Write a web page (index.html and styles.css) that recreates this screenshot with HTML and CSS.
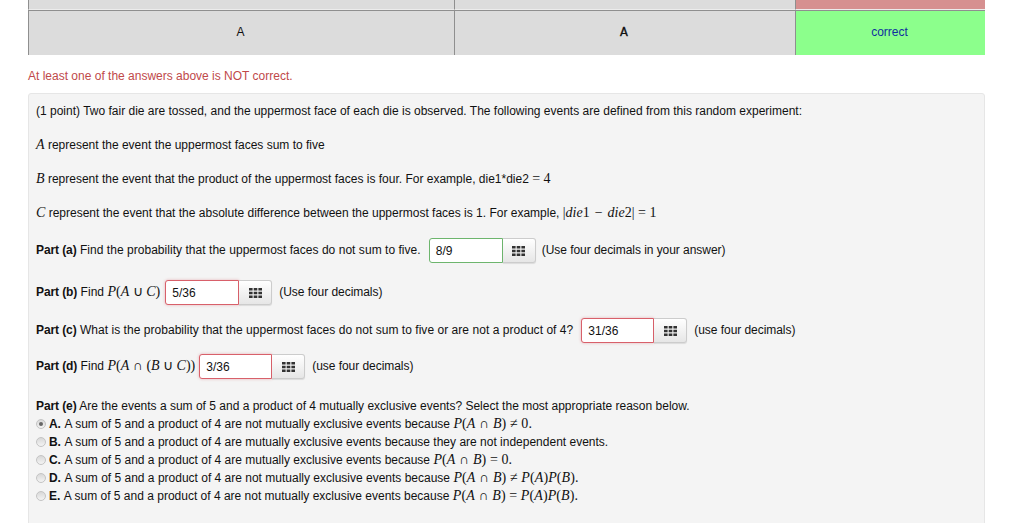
FILE: index.html
```html
<!DOCTYPE html>
<html lang="en">
<head>
<meta charset="utf-8">
<title>Problem</title>
<link rel="stylesheet" href="styles.css">
</head>
<body>
<div class="results">
  <div class="cell top"></div><div class="cell top"></div><div class="cell top bad"></div>
  <div class="cell main">A</div><div class="cell main mono">A</div><div class="cell main good">correct</div>
</div>
<p class="warn">At least one of the answers above is NOT correct.</p>
<div class="panel">
  <p class="line intro">(1 point) Two fair die are tossed, and the uppermost face of each die is observed. The following events are defined from this random experiment:</p>
  <p class="line def"><i class="m">A</i> represent the event the uppermost faces sum to five</p>
  <p class="line def"><i class="m">B</i> represent the event that the product of the uppermost faces is four. For example, die1*die2 <span class="m">= 4</span></p>
  <p class="line def"><i class="m">C</i> represent the event that the absolute difference between the uppermost faces is 1. For example, <span class="m">|<i>die</i>1 <span class="op">−</span> <i>die</i>2| = 1</span></p>
  <div class="part pa"><span class="q"><b>Part (a)</b> Find the probability that the uppermost faces do not sum to five.</span>
    <span class="answer"><span class="field ok">8/9</span><span class="grid-btn"><svg width="13" height="10" viewBox="0 0 13 10"><path d="M0 0h3.6v2.6H0zM4.7 0h3.6v2.6H4.7zM9.4 0H13v2.6H9.4zM0 3.7h3.6v2.6H0zM4.7 3.7h3.6v2.6H4.7zM9.4 3.7H13v2.6H9.4zM0 7.4h3.6V10H0zM4.7 7.4h3.6V10H4.7zM9.4 7.4H13V10H9.4z"/></svg></span></span>
    <span class="hint">(Use four decimals in your answer)</span></div>
  <div class="part pb"><span class="q"><b>Part (b)</b> Find <span class="m"><i>P</i>(<i>A</i> ∪ <i>C</i>)</span></span>
    <span class="answer"><span class="field no">5/36</span><span class="grid-btn"><svg width="13" height="10" viewBox="0 0 13 10"><path d="M0 0h3.6v2.6H0zM4.7 0h3.6v2.6H4.7zM9.4 0H13v2.6H9.4zM0 3.7h3.6v2.6H0zM4.7 3.7h3.6v2.6H4.7zM9.4 3.7H13v2.6H9.4zM0 7.4h3.6V10H0zM4.7 7.4h3.6V10H4.7zM9.4 7.4H13V10H9.4z"/></svg></span></span>
    <span class="hint">(Use four decimals)</span></div>
  <div class="part pc"><span class="q"><b>Part (c)</b> What is the probability that the uppermost faces do not sum to five or are not a product of 4?</span>
    <span class="answer"><span class="field no">31/36</span><span class="grid-btn"><svg width="13" height="10" viewBox="0 0 13 10"><path d="M0 0h3.6v2.6H0zM4.7 0h3.6v2.6H4.7zM9.4 0H13v2.6H9.4zM0 3.7h3.6v2.6H0zM4.7 3.7h3.6v2.6H4.7zM9.4 3.7H13v2.6H9.4zM0 7.4h3.6V10H0zM4.7 7.4h3.6V10H4.7zM9.4 7.4H13V10H9.4z"/></svg></span></span>
    <span class="hint">(use four decimals)</span></div>
  <div class="part pd"><span class="q"><b>Part (d)</b> Find <span class="m"><i>P</i>(<i>A</i> ∩ (<i>B</i> ∪ <i>C</i>))</span></span>
    <span class="answer"><span class="field no">3/36</span><span class="grid-btn"><svg width="13" height="10" viewBox="0 0 13 10"><path d="M0 0h3.6v2.6H0zM4.7 0h3.6v2.6H4.7zM9.4 0H13v2.6H9.4zM0 3.7h3.6v2.6H0zM4.7 3.7h3.6v2.6H4.7zM9.4 3.7H13v2.6H9.4zM0 7.4h3.6V10H0zM4.7 7.4h3.6V10H4.7zM9.4 7.4H13V10H9.4z"/></svg></span></span>
    <span class="hint">(use four decimals)</span></div>
  <p class="line pe"><b>Part (e)</b> Are the events a sum of 5 and a product of 4 mutually exclusive events? Select the most appropriate reason below.</p>
  <ul class="choices">
    <li><span class="radio on"></span><span><b>A.</b> A sum of 5 and a product of 4 are not mutually exclusive events because <span class="m"><i>P</i>(<i>A</i> ∩ <i>B</i>) ≠ 0.</span></span></li>
    <li><span class="radio"></span><span><b>B.</b> A sum of 5 and a product of 4 are mutually exclusive events because they are not independent events.</span></li>
    <li><span class="radio"></span><span><b>C.</b> A sum of 5 and a product of 4 are mutually exclusive events because <span class="m"><i>P</i>(<i>A</i> ∩ <i>B</i>) = 0.</span></span></li>
    <li><span class="radio"></span><span><b>D.</b> A sum of 5 and a product of 4 are not mutually exclusive events because <span class="m"><i>P</i>(<i>A</i> ∩ <i>B</i>) ≠ <i>P</i>(<i>A</i>)<i>P</i>(<i>B</i>).</span></span></li>
    <li><span class="radio"></span><span><b>E.</b> A sum of 5 and a product of 4 are not mutually exclusive events because <span class="m"><i>P</i>(<i>A</i> ∩ <i>B</i>) = <i>P</i>(<i>A</i>)<i>P</i>(<i>B</i>).</span></span></li>
  </ul>
</div>
</body>
</html>
```
FILE: styles.css
```css
html, body { margin: 0; padding: 0; height: 523px; overflow: hidden; background: #fff; }
body { padding: 0 39px 0 28px; font: 12px/18px "Liberation Sans", Arial, sans-serif; color: #111; }
p { margin: 0; }
b { letter-spacing: -.1px; }
.results { display: grid; grid-template-columns: 426px 341px 190px; grid-template-rows: 9px 46px; }
.cell { background: #dcdcdc; border-left: 1px solid #8f8f8f; display: flex; align-items: center; justify-content: center; }
.main { border-top: 1px solid #ececec; box-shadow: inset 0 1px 0 #8f8f8f; padding-bottom: 1px; padding-right: 2px; }
.top.bad { background: #d69090; }
.main.good { background: #8cff8c; color: #0f2f9f; }
.mono { font-family: "Liberation Mono", monospace; font-size: 13px; -webkit-text-stroke: .3px #111; padding-bottom: 0; }
.warn { color: #c0494a; margin-top: 12px; height: 18px; line-height: 18px; }
.panel { margin-top: 8px; height: 440px; box-sizing: border-box; padding: 8px 7px 0; background: #f4f4f4; border: 1px solid #e6e6e6; border-radius: 3px; }
.line { height: 18px; }
.def { margin-top: 16px; }
.m { font-family: "Liberation Serif", serif; font-size: 14px; }
.op { margin: 0 1.5px; }
.part { display: flex; align-items: center; height: 25px; gap: 7px; }
.q { letter-spacing: .04px; margin-top: -2px; }
.q .m { letter-spacing: 0; }
.hint { letter-spacing: -.05px; margin: -2px 0 0; }
.pa { margin-top: 16px; }
.pb { margin-top: 17px; }
.pc { margin-top: 13px; }
.pd { margin-top: 11px; }
.pe { margin-top: 18px; }
.pa .answer { margin-left: 1px; }
.pa .hint { margin-left: -1px; }
.pb .answer { margin-left: -2px; }
.pd .answer { margin-left: -3px; }
.pc .answer { margin-left: 1px; }
.pc .field, .pd .field { width: 73px; }
.pd .q, .pd .hint { margin-top: -1px; }
.answer { display: inline-flex; height: 25px; }
.field { box-sizing: border-box; width: 74px; height: 25px; padding: 0 6px; background: #fff; border: 1px solid #ccc; border-radius: 3px 0 0 3px; display: flex; align-items: center; }
.field.ok { border-color: #6db56d; }
.field.no { border-color: #d8606a; box-shadow: 0 0 3px rgba(216, 96, 106, .45); }
.grid-btn { box-sizing: border-box; width: 33px; height: 25px; border: 1px solid #ccc; border-left: 0; border-radius: 0 3px 3px 0; background: linear-gradient(#fff, #e6e6e6); display: flex; align-items: center; justify-content: center; box-shadow: 0 1px 1px rgba(0, 0, 0, .1); }
.grid-btn svg { fill: #333; display: block; }
.choices { list-style: none; margin: 0; padding: 0; }
.choices li { display: flex; align-items: center; height: 18px; gap: 3px; }
.choices b { margin-right: 1px; }
.choices .m { letter-spacing: .1px; }
.radio { box-sizing: border-box; width: 10px; height: 10px; margin-top: -1px; border-radius: 50%; border: 1px solid #c4c4c4; background: linear-gradient(#d8d8d8, #f4f4f4); display: flex; align-items: center; justify-content: center; }
.radio.on::after { content: ""; width: 4px; height: 4px; border-radius: 50%; background: #666; }
```
